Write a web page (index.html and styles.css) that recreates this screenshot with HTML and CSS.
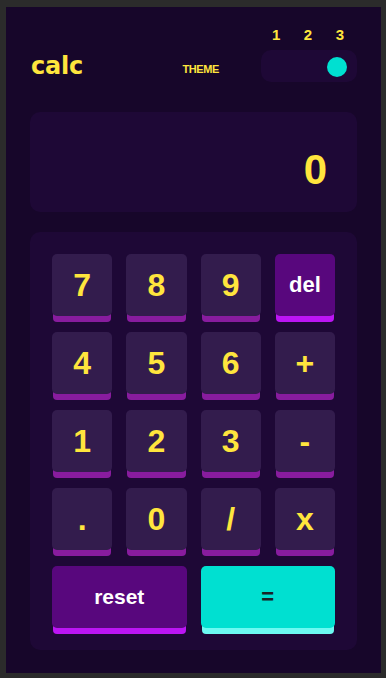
FILE: index.html
```html
<!DOCTYPE html>
<html lang="en">
<head>
<meta charset="utf-8">
<title>calc</title>
<link rel="stylesheet" href="styles.css">
</head>
<body>
<div class="app">
  <header class="header">
    <div class="logo">calc</div>
    <div class="theme">
      <div class="theme-label">THEME</div>
      <div class="theme-switch">
        <div class="theme-nums"><span>1</span><span>2</span><span>3</span></div>
        <div class="toggle"><span class="knob"></span></div>
      </div>
    </div>
  </header>
  <div class="screen"><span class="screen-value">0</span></div>
  <div class="keypad">
    <button class="key">7</button>
    <button class="key">8</button>
    <button class="key">9</button>
    <button class="key key-del">del</button>
    <button class="key">4</button>
    <button class="key">5</button>
    <button class="key">6</button>
    <button class="key">+</button>
    <button class="key">1</button>
    <button class="key">2</button>
    <button class="key">3</button>
    <button class="key">-</button>
    <button class="key">.</button>
    <button class="key">0</button>
    <button class="key">/</button>
    <button class="key">x</button>
    <button class="key key-reset">reset</button>
    <button class="key key-equals">=</button>
  </div>
</div>
</body>
</html>
```
FILE: styles.css
```css
html {
  background: #2b2b2b;
}
body {
  margin: 7px 5px 5px 6px;
  font-family: "Liberation Sans", Arial, sans-serif;
}
.app {
  height: 666px;
  box-sizing: border-box;
  background: #17062a;
  padding: 19px 24px 0;
}
.header {
  display: flex;
  justify-content: space-between;
  align-items: flex-end;
}
.logo {
  font-family: "DejaVu Sans", sans-serif;
  font-weight: 700;
  font-size: 24px;
  line-height: 32px;
  color: #ffe53d;
  padding-left: 1px;
  letter-spacing: -0.2px;
}
.theme {
  display: flex;
  align-items: flex-end;
  gap: 42px;
}
.theme-label {
  font-weight: 700;
  font-size: 11px;
  line-height: 20px;
  letter-spacing: -0.4px;
  color: #ffe53d;
  margin-bottom: 3px;
}
.theme-switch {
  width: 96px;
  display: flex;
  flex-direction: column;
  gap: 6px;
}
.theme-nums {
  display: flex;
  justify-content: space-between;
  padding: 0 13px 0 11px;
  font-weight: 700;
  font-size: 15px;
  line-height: 18px;
  color: #ffe53d;
}
.toggle {
  height: 32px;
  box-sizing: border-box;
  border-radius: 10px;
  background: #1e0836;
  display: flex;
  justify-content: flex-end;
  align-items: flex-start;
  padding: 7px 10px 0;
}
.knob {
  width: 20px;
  height: 20px;
  border-radius: 50%;
  background: #00e0d1;
}
.screen {
  margin-top: 30px;
  height: 100px;
  box-sizing: border-box;
  border-radius: 10px;
  background: #1e0836;
  display: flex;
  justify-content: flex-end;
  align-items: flex-end;
  padding: 0 30px 21px;
}
.screen-value {
  font-weight: 700;
  font-size: 42px;
  line-height: 42px;
  color: #ffe53d;
}
.keypad {
  margin-top: 20px;
  border-radius: 10px;
  background: #1e0836;
  padding: 22px;
  display: grid;
  grid-template-columns: repeat(4, 1fr);
  grid-auto-rows: 62px;
  column-gap: 14px;
  row-gap: 16px;
}
.key {
  border: none;
  margin: 0;
  padding: 0;
  border-radius: 5px;
  background: #331c4d;
  box-shadow: 0 7px 0 -1px #881c9e;
  font-family: "Liberation Sans", Arial, sans-serif;
  font-weight: 700;
  font-size: 32px;
  color: #ffe53d;
  display: flex;
  align-items: center;
  justify-content: center;
}
.key-del {
  background: #58077d;
  box-shadow: 0 7px 0 -1px #bc15f4;
  color: #ffffff;
  font-size: 22px;
}
.key-reset {
  grid-column: span 2;
  background: #58077d;
  box-shadow: 0 7px 0 -1px #bc15f4;
  color: #ffffff;
  font-size: 21px;
}
.key-equals {
  grid-column: span 2;
  background: #00e0d1;
  box-shadow: 0 7px 0 -1px #6cf9f1;
  color: #1a2327;
  font-size: 22px;
}
```
